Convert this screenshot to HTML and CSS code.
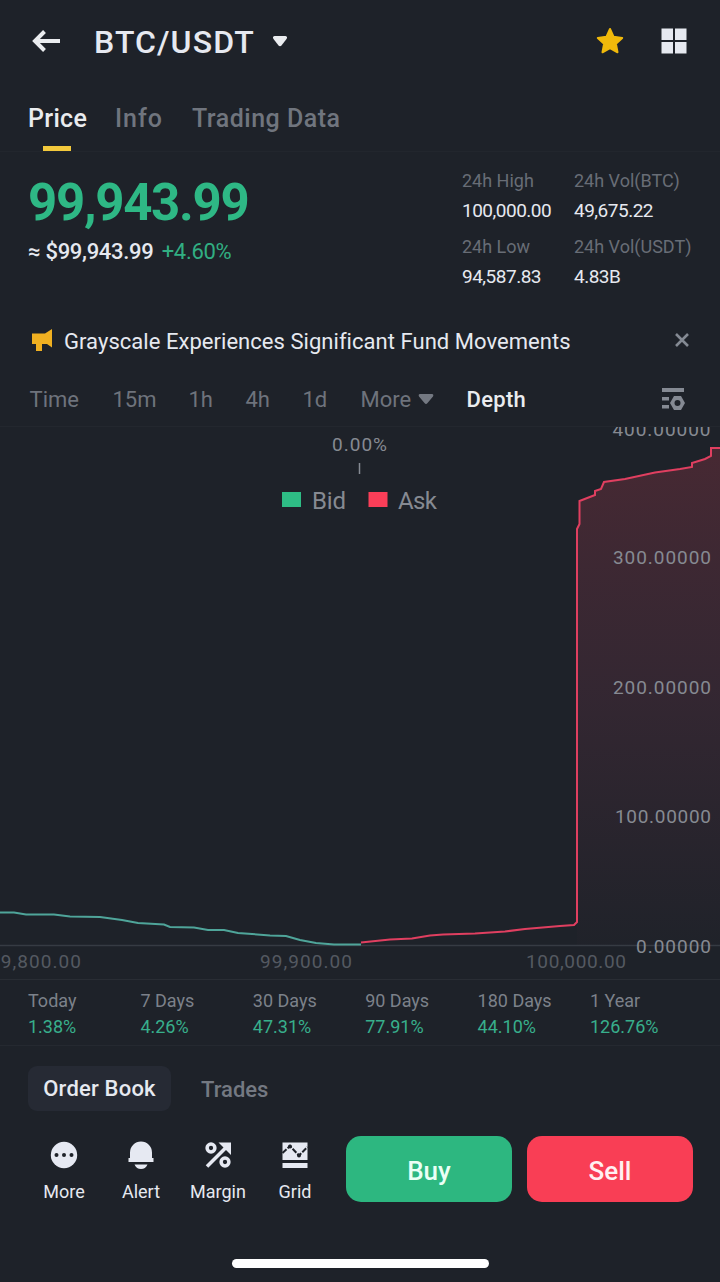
FILE: index.html
```html
<!DOCTYPE html>
<html lang="en">
<head>
    <meta charset="UTF-8">
    <meta name="viewport" content="width=device-width, initial-scale=1.0">
    <title>BTC/USDT</title>
    <link rel="stylesheet" href="styles.css">
</head>
<body>
    <header class="header">
        <svg class="back" width="28" height="22" viewBox="0 0 28 22"><path d="M12.500 1.500L3 11l9.500 9.500M3 11h25" fill="none" stroke="#eaecef" stroke-width="4"/></svg>
        <h1 class="pair">BTC/USDT</h1>
        <svg class="caret" width="16" height="12" viewBox="0 0 16 12"><path d="M2.500 1h11Q16 1.500 14.500 4L9.500 10.500Q8 12 6.500 10.500L1.500 4Q0 1.500 2.500 1z" fill="#eaecef"/></svg>
        <svg class="star" width="28" height="28" viewBox="0 0 28 28"><path d="M14 2l3.600 7.800 8.600 1.100-6.300 5.900 1.600 8.500L14 21.200l-7.500 4.100 1.600-8.500-6.300-5.900 8.600-1.100z" fill="#f0b90b" stroke="#f0b90b" stroke-width="2" stroke-linejoin="round"/></svg>
        <svg class="apps" width="26" height="26" viewBox="0 0 26 26"><path d="M.5.5h11.500v11.500H.5zM14 .5h11.500v11.500H14zM.5 14h11.500v11.500H.5zM14 14h11.500v11.500H14z" fill="#e6e9f0"/></svg>
    </header>

    <nav class="tabs">
        <a class="tab active">Price</a>
        <a class="tab tab-info">Info</a>
        <a class="tab tab-data">Trading Data</a>
    </nav>

    <section class="summary">
        <div class="quote">
            <div class="price">99,943.99</div>
            <div class="fiat">≈ $99,943.99 <span class="change">+4.60%</span></div>
        </div>
        <dl class="day-stats">
            <div><dt>24h High</dt><dd>100,000.00</dd></div>
            <div><dt>24h Vol(BTC)</dt><dd>49,675.22</dd></div>
            <div><dt>24h Low</dt><dd>94,587.83</dd></div>
            <div><dt>24h Vol(USDT)</dt><dd>4.83B</dd></div>
        </dl>
    </section>

    <div class="notice">
        <svg width="20" height="22" viewBox="0 0 20 22"><path d="M0 4.500h13L20 0v18.500l-5-3.500h-5v7H4v-7H0z" fill="#f0b021"/></svg>
        <span class="notice-text">Grayscale Experiences Significant Fund Movements</span>
        <svg class="close" width="14" height="14" viewBox="0 0 14 14"><path d="M1 1l12 12M13 1L1 13" stroke="#848a93" stroke-width="2.600"/></svg>
    </div>

    <nav class="intervals">
        <span>Time</span>
        <span>15m</span>
        <span>1h</span>
        <span>4h</span>
        <span>1d</span>
        <span class="more">More <svg width="16" height="12" viewBox="0 0 16 12"><path d="M2 1h12Q16 1.300 15 3.500L9.500 10Q8 12 6.500 10L1 3.500Q0 1.300 2 1z" fill="#747982"/></svg></span>
        <span class="depth">Depth</span>
        <svg class="settings" width="24" height="24" viewBox="0 0 24 24">
            <path d="M1 1h22v4H1zM1 10h7v3.500H1zM1 18h7v3.500H1z" fill="#858a93"/>
            <path d="M13 9h7l4 7-4 7h-7l-4-7zM16.500 13a3 3 0 1 0 0 6 3 3 0 1 0 0-6z" fill="#858a93" fill-rule="evenodd"/>
        </svg>
    </nav>

    <svg class="chart" viewBox="0 427 720 552">
        <defs>
            <linearGradient id="askFill" gradientUnits="userSpaceOnUse" x1="0" y1="448" x2="0" y2="945">
                <stop offset="0" stop-color="#f6465d" stop-opacity=".19"/>
                <stop offset=".5" stop-color="#d04a70" stop-opacity=".12"/>
                <stop offset="1" stop-color="#d04a70" stop-opacity=".01"/>
            </linearGradient>
        </defs>
        <path d="M0 945.500h720" stroke="#363b43" stroke-width="1.500"/>
        <path fill="url(#askFill)" d="M577 945V529L579.500 524V501L595 495V491L601 489L604 482L625 479L655 472.500L680 469L692 467V463L705 459L711 456V448H720V945z"/>
        <path class="bid" d="M0 912.500H14L26 914.500H54L70 916.500L100 917L122 920L138 923L164 924.500L170 927L194 927.500L208 930L224 930L238 933L252 934L270 935.500L286 936L300 940L316 943L334 944.500H361"/>
        <path class="ask" d="M361 942.500L390 939.500L412 938.500L430 935.500L443 934.500L475 933.500L505 931.500L525 929L560 926L574 925L577 922V529L579.500 524V501L595 495V491L601 489L604 482L625 479L655 472.500L680 469L692 467V463L705 459L711 456V448H720"/>
        <text x="332" y="451" textLength="55">0.00%</text>
        <path d="M359.500 463v11" stroke="#858a93" stroke-width="1.500"/>
        <path d="M282 492h19v15h-19z" fill="#2ebd85"/>
        <text class="legend" x="312" y="508.500" textLength="34">Bid</text>
        <path d="M368.500 492h19v15h-19z" fill="#fb3e58"/>
        <text class="legend" x="398" y="508.500" textLength="39">Ask</text>
        <g class="amounts">
            <text x="612.500" y="435.500" textLength="98">400.00000</text>
            <text x="613" y="564" textLength="98">300.00000</text>
            <text x="613" y="693.500" textLength="98">200.00000</text>
            <text x="615" y="823" textLength="96">100.00000</text>
            <text x="636" y="952.500" textLength="75">0.00000</text>
        </g>
        <g class="prices">
            <text x="-11" y="967.500" textLength="92">99,800.00</text>
            <text x="260" y="967.500" textLength="92">99,900.00</text>
            <text x="526" y="967.500" textLength="100">100,000.00</text>
        </g>
    </svg>

    <section class="returns">
        <div>Today<b>1.38%</b></div>
        <div>7 Days<b>4.26%</b></div>
        <div>30 Days<b>47.31%</b></div>
        <div>90 Days<b>77.91%</b></div>
        <div>180 Days<b>44.10%</b></div>
        <div>1 Year<b>126.76%</b></div>
    </section>

    <nav class="book-tabs">
        <span class="book active">Order Book</span>
        <span class="trades">Trades</span>
    </nav>

    <footer class="actions">
        <a class="action">
            <svg width="28" height="28" viewBox="0 0 28 28"><circle cx="14" cy="14" r="13.200" fill="#e6e9f2"/><g fill="#1e2229"><circle cx="6.500" cy="14" r="2"/><circle cx="14" cy="14" r="2"/><circle cx="21.500" cy="14" r="2"/></g></svg>
            More
        </a>
        <a class="action">
            <svg width="28" height="28" viewBox="0 0 28 28"><path d="M3 17v-5.500a11 11 0 0 1 22 0V17h1.500v4h-25v-4zM7.500 23.500h13q-2 4.500-6.500 4.500t-6.500-4.500z" fill="#e6e9f2"/></svg>
            Alert
        </a>
        <a class="action">
            <svg width="28" height="28" viewBox="0 0 28 28"><g fill="none" stroke="#e6e9f2" stroke-width="3.500"><circle cx="7" cy="7" r="3.900"/><circle cx="21" cy="21" r="3.900"/><path d="M3 25.500L22 6.500"/></g><path d="M14.500 1.500H27V14z" fill="#e6e9f2"/></svg>
            Margin
        </a>
        <a class="action">
            <svg width="28" height="28" viewBox="0 0 28 28"><path d="M1.500 1.500h25v17.500h-25zM1.500 22h25v5h-25z" fill="#e6e9f2"/><path d="M1.500 12L9 5l9 9.500L26.500 6" fill="none" stroke="#1e2229" stroke-width="2" stroke-dasharray="5.500 1.500"/><g fill="#1e2229"><circle cx="9" cy="5.500" r="2"/><circle cx="18" cy="14.500" r="2"/></g></svg>
            Grid
        </a>
        <button class="buy">Buy</button>
        <button class="sell">Sell</button>
    </footer>
    <div class="home-bar"></div>
</body>
</html>
```
FILE: styles.css
```css
* {
    box-sizing: border-box;
}
body {
    margin: 0;
    height: 1282px;
    overflow: hidden;
    display: flex;
    flex-direction: column;
    background: #1e2229;
    color: #e6e9f0;
    font-family: Roboto, "Liberation Sans", sans-serif;
}
svg {
    display: block;
    flex: none;
}
.header {
    height: 84px;
    display: flex;
    align-items: center;
    padding: 0 33px 2px 32px;
}
.pair {
    margin: 2px 0 0 34px;
    font-size: 32px;
    font-weight: 500;
    letter-spacing: 1.1px;
    width: 162px;
    white-space: nowrap;
}
.caret {
    margin-left: 16px;
}
.star {
    margin-left: auto;
}
.apps {
    margin-left: 37px;
}
.tabs {
    height: 68px;
    display: flex;
    padding-left: 28px;
    border-bottom: 1px solid #22262d;
    font-size: 25px;
    line-height: 69px;
    font-weight: 500;
    letter-spacing: 0.3px;
    color: #70757e;
}
.tab.active {
    width: 87px;
    color: #eaecef;
    background: linear-gradient(#f3c93c, #f3c93c) 15px 62px / 28px 5px no-repeat;
}
.tab-info {
    width: 77px;
    letter-spacing: 1px;
}
.tab-data {
    letter-spacing: 0.5px;
}
.summary {
    height: 158px;
    display: flex;
    justify-content: space-between;
    padding: 17px 28px 0 28px;
}
.price {
    font-size: 51px;
    line-height: 68px;
    font-weight: 700;
    letter-spacing: -1.3px;
    color: #2eb885;
}
.fiat {
    font-size: 22px;
    line-height: 30px;
    font-weight: 500;
    letter-spacing: -0.3px;
    white-space: nowrap;
}
.change {
    margin-left: 3px;
    font-weight: 400;
    color: #31ae82;
}
.day-stats {
    display: grid;
    grid-template-columns: 112px 118px;
    grid-auto-rows: 66px;
    margin: 0;
    font-size: 19px;
    white-space: nowrap;
}
.day-stats dt {
    line-height: 24px;
    font-size: 18px;
    color: #686d76;
}
.day-stats dd {
    margin: 5px 0 0;
    line-height: 25px;
    letter-spacing: -0.5px;
}
.notice {
    height: 62px;
    display: flex;
    align-items: center;
    padding: 0 31px 2px 32px;
    font-size: 22px;
}
.notice-text {
    margin: 2px 0 0 12px;
    letter-spacing: 0.04px;
    white-space: nowrap;
}
.close {
    margin-left: auto;
}
.intervals {
    height: 55px;
    display: grid;
    grid-template-columns: 83px 76px 57px 57px 58px 106px 194px 24px;
    align-items: center;
    padding-left: 29.5px;
    border-bottom: 1px solid #23272e;
    font-size: 22px;
    color: #6e737c;
}
.more {
    display: flex;
    align-items: center;
    gap: 7px;
}
.depth {
    font-weight: 500;
    letter-spacing: 0.3px;
    color: #eaecef;
}
.chart {
    width: 720px;
    height: 552px;
}
.chart text {
    font-size: 19px;
    fill: #868a92;
}
.chart .legend {
    font-size: 24px;
}
.chart .prices text {
    fill: #545961;
}
.bid,
.ask {
    fill: none;
    stroke-width: 2;
}
.bid {
    stroke: #4fa59a;
}
.ask {
    stroke: #e03f60;
}
.returns {
    height: 67px;
    display: grid;
    grid-template-columns: repeat(6, 112.4px);
    padding: 8px 0 0 28px;
    border-top: 1px solid #292d34;
    border-bottom: 1px solid #252930;
    font-size: 18px;
    line-height: 26px;
    color: #7c818a;
}
.returns b {
    display: block;
    font-weight: 400;
    color: #38af8c;
}
.book-tabs {
    display: flex;
    align-items: center;
    height: 84px;
    padding-left: 28px;
    font-size: 22px;
    font-weight: 500;
    color: #747982;
}
.book {
    width: 143px;
    border-radius: 9px;
    line-height: 44px;
    padding-top: 1px;
    letter-spacing: 0.2px;
    text-align: center;
    color: #e6e9f0;
    background: #262a34;
}
.trades {
    margin: 2px 0 0 30px;
}
.actions {
    display: flex;
    margin-top: 6px;
    height: 66px;
    padding-left: 25.5px;
}
.action {
    width: 77px;
    padding-top: 5px;
    display: flex;
    flex-direction: column;
    align-items: center;
    gap: 10px;
    font-size: 18px;
    line-height: 26px;
}
.buy,
.sell {
    width: 166px;
    padding-top: 4px;
    border: none;
    border-radius: 15px;
    font-family: inherit;
    font-size: 26px;
    font-weight: 500;
    color: #eafff5;
}
.buy {
    margin-left: 12.5px;
    background: #2db780;
}
.sell {
    margin-left: 15px;
    background: #f93e55;
    color: #fff0f2;
}
.home-bar {
    width: 257px;
    height: 9px;
    margin: 57px 0 0 232px;
    border-radius: 5px;
    background: #fff;
}
```
